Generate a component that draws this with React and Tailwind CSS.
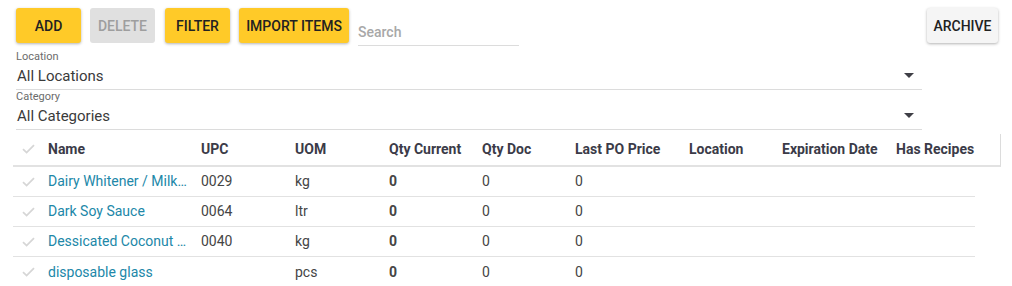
import React from "react";

const cols = [
  { key: "check", w: "w-[27px]" },
  { key: "name", label: "Name", w: "w-[153px]" },
  { key: "upc", label: "UPC", w: "w-[94px]" },
  { key: "uom", label: "UOM", w: "w-[94px]" },
  { key: "cur", label: "Qty Current", w: "w-[93px]" },
  { key: "doc", label: "Qty Doc", w: "w-[93px]" },
  { key: "price", label: "Last PO Price", w: "w-[114px]" },
  { key: "loc", label: "Location", w: "w-[93px]" },
  { key: "exp", label: "Expiration Date", w: "w-[114px]" },
  { key: "rec", label: "Has Recipes", w: "w-[113px]" },
];

const items = [
  { name: "Dairy Whitener / Milk Powder", upc: "0029", uom: "kg" },
  { name: "Dark Soy Sauce", upc: "0064", uom: "ltr" },
  { name: "Dessicated Coconut Powder", upc: "0040", uom: "kg" },
  { name: "disposable glass", upc: "", uom: "pcs" },
];

function Check() {
  return (
    <svg width="13" height="10" viewBox="0 0 13 10" className="ml-[9px]">
      <path d="M1 5.2 L4.6 8.6 L12 1.2" fill="none" stroke="#d6d6d6" strokeWidth="1.8" />
    </svg>
  );
}

function Caret() {
  return (
    <svg width="10" height="6" viewBox="0 0 10 6">
      <path d="M0 0 L10 0 L5 5 Z" fill="#3f3f46" />
    </svg>
  );
}

function SelectField({ label, value }) {
  return (
    <div className="w-[906px] ml-4 border-b border-[#dcdcdc]">
      <div className="text-[11px] leading-[13px] text-[#6b6b6b]">{label}</div>
      <div className="flex items-center justify-between h-[26px] pr-[8px]">
        <span className="text-[15px] text-[#3a3a3a] ml-[1px]">{value}</span>
        <Caret />
      </div>
    </div>
  );
}

export default function App() {
  return (
    <div className="w-[1012px] h-[286px] bg-white overflow-hidden font-['Roboto',sans-serif]">
      {/* toolbar */}
      <div className="flex items-start pt-2 pl-4 pr-[14px]">
        <button className="h-[35px] w-[65px] pt-[2px] bg-[#ffca28] rounded-[3px] shadow-[0_1px_3px_rgba(0,0,0,0.3)] text-[14px] font-medium text-[#222]">
          ADD
        </button>
        <button className="h-[35px] w-[65px] pt-[2px] ml-[9px] bg-[#e0e0e0] rounded-[3px] text-[14px] font-medium text-[#9e9e9e]">
          DELETE
        </button>
        <button className="h-[35px] w-[65px] pt-[2px] ml-[10px] bg-[#ffca28] rounded-[3px] shadow-[0_1px_3px_rgba(0,0,0,0.3)] text-[14px] font-medium text-[#222]">
          FILTER
        </button>
        <button className="h-[35px] w-[110px] pt-[2px] ml-[9px] bg-[#ffca28] rounded-[3px] shadow-[0_1px_3px_rgba(0,0,0,0.3)] text-[14px] font-medium text-[#222]">
          IMPORT ITEMS
        </button>
        <div className="ml-[9px] w-[161px] h-[38px] border-b border-[#dcdcdc] flex items-end pb-[2px]">
          <span className="text-[14px] text-[#a8a8a8] font-medium">Search</span>
        </div>
        <div className="flex-1" />
        <button className="h-[35px] w-[71px] pt-[2px] bg-[#f5f5f5] rounded-[3px] shadow-[0_1px_3px_rgba(0,0,0,0.3)] text-[14px] font-medium text-[#222]">
          ARCHIVE
        </button>
      </div>

      <div className="mt-[4px]">
        <SelectField label="Location" value="All Locations" />
      </div>
      <div className="mt-0">
        <SelectField label="Category" value="All Categories" />
      </div>

      {/* table */}
      <div className="ml-[13px] mt-[4px] w-[988px]">
        <div className="flex h-[33px] pb-[1px] items-center border-b-2 border-[#e2e2e2] border-r border-r-[#dcdcdc]">
          {cols.map((c) => (
            <div key={c.key} className={`${c.w} shrink-0 ${c.key === "check" ? "" : "pl-2"} text-[14px] font-bold text-[#3b3b48]`}>
              {c.key === "check" ? <Check /> : c.label}
            </div>
          ))}
        </div>
        {items.map((it, i) => (
          <div
            key={it.name}
            className={`flex h-[30px] items-center w-[962px] ${i < items.length - 1 ? "border-b border-[#e2e2e2]" : ""}`}
          >
            <div className="w-[27px] shrink-0">
              <Check />
            </div>
            <div className="w-[153px] shrink-0 pl-2 pr-[4px] truncate text-[14px] text-[#2187a8]">{it.name}</div>
            <div className="w-[94px] shrink-0 pl-2 text-[14px] text-[#454545]">{it.upc}</div>
            <div className="w-[94px] shrink-0 pl-2 text-[14px] text-[#454545]">{it.uom}</div>
            <div className="w-[93px] shrink-0 pl-2 text-[14px] font-bold text-[#454545]">0</div>
            <div className="w-[93px] shrink-0 pl-2 text-[14px] text-[#454545]">0</div>
            <div className="w-[114px] shrink-0 pl-2 text-[14px] text-[#454545]">0</div>
          </div>
        ))}
      </div>
    </div>
  );
}
